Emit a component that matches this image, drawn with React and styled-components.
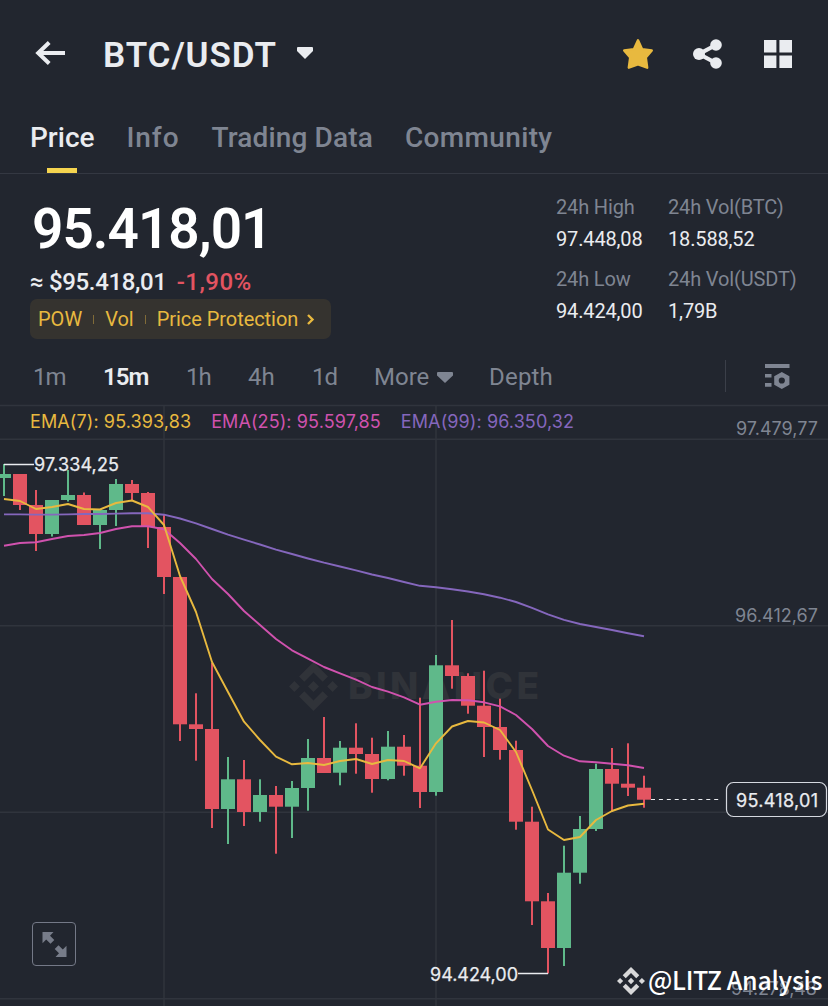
import React from "react";
import styled, { createGlobalStyle } from "styled-components";

const c = {
  bg: "#22262f",
  text: "#eaecf0",
  muted: "#7f8592",
  line: "#30343d",
  gold: "#e8b93f",
  red: "#e35461",
  green: "#5fb98a",
  pink: "#d052ae",
  purple: "#8567bd",
};

const GlobalStyle = createGlobalStyle`
  * { box-sizing: border-box; }
  body { margin: 0; background: ${c.bg}; }
`;

const Screen = styled.main`
  width: 828px;
  height: 1006px;
  overflow: hidden;
  display: flex;
  flex-direction: column;
  background: ${c.bg};
  color: ${c.text};
  font-family: Roboto, "Liberation Sans", sans-serif;
  white-space: nowrap;
`;

const Text = styled.span`
  margin: 0;
  font-size: ${(p) => p.$size}px;
  line-height: ${(p) => p.$line || p.$size}px;
  font-weight: ${(p) => p.$weight || 400};
  letter-spacing: ${(p) => p.$track || 0}px;
  color: ${(p) => p.$color || "inherit"};
`;

const Icon = styled.svg`
  display: block;
  flex: none;
  overflow: visible;
`;

const Header = styled.header`
  height: 108px;
  flex: none;
  display: flex;
  align-items: center;
  padding: 0 36px 0 35px;
`;

const Pair = styled.div`
  display: flex;
  align-items: center;
  gap: 20px;
  margin-left: 37px;
  h1 { padding-top: 2px; }
  svg { margin-bottom: 2px; }
`;

const BackIcon = styled(Icon)`
  margin-bottom: 2px;
`;

const Actions = styled.div`
  display: flex;
  align-items: center;
  gap: 40px;
  margin-left: auto;
`;

const GridIcon = styled(Icon)`
  margin-left: 2px;
`;

const Tabs = styled.nav`
  height: 66px;
  flex: none;
  display: flex;
  gap: 32px;
  padding-left: 30px;
  border-bottom: 1px solid #343842;
`;

const Tab = styled.div`
  display: flex;
  flex-direction: column;
  align-items: center;
  justify-content: space-between;
  padding-top: 14px;
  color: ${(p) => (p.$active ? c.text : c.muted)};
  &::after {
    content: "";
    width: 30px;
    height: 5px;
    background: ${(p) => (p.$active ? "#f5d44f" : "transparent")};
  }
`;

const Summary = styled.section`
  height: 175px;
  flex: none;
  display: flex;
  justify-content: space-between;
  padding: 0 31px 0 30px;
`;

const PriceBlock = styled.div`
  display: flex;
  flex-direction: column;
  align-items: flex-start;
  padding-top: 27px;
`;

const LastPrice = styled(Text)`
  padding-left: 2px;
`;

const Converted = styled.div`
  display: flex;
  gap: 10px;
  margin-top: 11px;
`;

const Tags = styled.div`
  height: 40px;
  width: 301px;
  margin-top: 3px;
  padding-left: 8px;
  display: flex;
  align-items: center;
  border-radius: 7px;
  background: #35332f;
  color: ${c.gold};
`;

const TagDivider = styled.i`
  width: 1px;
  height: 9px;
  margin: 0 11px;
  background: #806b38;
`;

const TagArrow = styled(Icon)`
  margin-left: 9px;
`;

const Stats = styled.dl`
  width: 241px;
  margin: 0;
  padding-top: 19px;
  display: grid;
  grid-template-columns: 112px 1fr;
  grid-auto-rows: 72px;
`;

const StatCell = styled.div`
  display: flex;
  flex-direction: column;
  gap: 4px;
`;

const Periods = styled.nav`
  height: 56px;
  flex: none;
  display: flex;
  align-items: center;
  padding: 0 38px 0 33px;
`;

const PeriodItem = styled.div`
  width: ${(p) => p.$width}px;
  display: flex;
  align-items: center;
  gap: 8px;
  color: ${(p) => (p.$active ? c.text : c.muted)};
`;

const Settings = styled.div`
  height: 32px;
  margin-left: auto;
  margin-bottom: 2px;
  padding-left: 39px;
  display: flex;
  align-items: center;
  border-left: 1px solid #3b3f49;
`;

const ChartArea = styled.section`
  position: relative;
  height: 601px;
  flex: none;
`;

const Legend = styled.div`
  position: absolute;
  top: 7px;
  left: 30px;
  display: flex;
  gap: 20px;
  font-family: Inter, sans-serif;
`;

const ExpandButton = styled.button`
  position: absolute;
  left: 32px;
  top: 517px;
  width: 44px;
  height: 44px;
  padding: 0;
  display: grid;
  place-items: center;
  border: 1.5px solid #747987;
  border-radius: 4px;
  background: transparent;
`;

const Signature = styled.div`
  position: absolute;
  left: 617px;
  top: 558px;
  display: flex;
  align-items: center;
  gap: 3px;
  color: #fff;
  font-family: "Noto Sans CJK SC", "Noto Sans", sans-serif;
  span { margin-top: -3px; }
`;

// [direction, high, open/close top, open/close bottom, low]
const candles = [
  ["g", 464, 474, 478, 496], ["r", 474, 474, 505, 510],
  ["r", 490, 505, 534, 551], ["g", 500, 500, 534, 536.5],
  ["g", 470, 495, 500, 501.5], ["r", 492.5, 495, 525, 525],
  ["g", 510, 510, 525, 549], ["g", 479, 484, 510, 526],
  ["r", 480, 484, 493, 500.5], ["r", 492, 493, 527, 548],
  ["r", 515, 527, 577, 594], ["r", 577, 577, 724.3, 741],
  ["r", 693.3, 724.3, 729, 760.7], ["r", 663, 729, 809, 828],
  ["g", 757, 779.3, 809, 844], ["r", 760, 779.3, 812, 826],
  ["g", 779.3, 795, 812, 821.7], ["r", 786, 795, 806.7, 853.7],
  ["g", 781, 788, 806.7, 838], ["g", 739, 758, 788, 810.7],
  ["r", 717, 758, 773, 773], ["g", 741, 747.7, 772.7, 785.3],
  ["r", 723.3, 747.7, 754, 773.7], ["r", 737.7, 754, 779, 792.7],
  ["g", 731, 746.7, 779, 780.3], ["r", 735, 746.7, 765.7, 775.7],
  ["r", 697.7, 765.7, 792, 808], ["g", 655, 665.3, 792, 795.7],
  ["r", 620, 665.3, 676, 688.7], ["r", 673.3, 676, 705.7, 713.7],
  ["r", 670.7, 705.7, 727, 757], ["r", 698.7, 727, 750, 759.7],
  ["r", 740.7, 750, 821.7, 829.7], ["r", 806.7, 821.7, 901.3, 925],
  ["r", 893, 901.3, 948, 973.5], ["g", 845.7, 872.7, 948, 966],
  ["g", 816, 829, 872.7, 883.7], ["g", 763.7, 769, 829, 831],
  ["r", 748, 769, 783.7, 812], ["r", 743.3, 783.7, 787.7, 796],
  ["r", 775.7, 787.7, 799.7, 807.7],
];

const ema7 = [499, 501, 509, 507, 504, 509, 509.5, 503, 500.5, 507, 525, 576, 612, 662, 692, 721.7, 740, 756.7, 764.3, 763, 765, 761, 759, 764, 760, 761, 768.3, 743.3, 726.5, 721, 722.5, 730, 752, 790, 829.5, 840, 837, 820, 811, 805.5, 803.7];
const ema25 = [545.7, 543, 542.2, 539, 536, 535, 533, 529, 526.3, 526.3, 529.3, 543, 559, 579, 594, 611, 625, 639, 650.3, 658.7, 667, 673.3, 679.7, 687, 691.7, 697.3, 704.7, 701.7, 700, 700.3, 702.3, 706.3, 715, 729, 746, 755.7, 761.3, 762.3, 763.7, 765.3, 768];
const ema99 = [514.4, 514.4, 514.6, 514.6, 514.4, 514, 514, 513.6, 513.2, 513.2, 514.7, 518.5, 523.3, 529, 534.7, 539.7, 544.5, 549.6, 554, 558.5, 562.7, 566.5, 570.3, 574.5, 578, 582, 585.8, 587.3, 589.3, 591.5, 594.2, 597.7, 602, 607.8, 614.3, 619.8, 624, 627, 630, 633.3, 636.3];

const toPath = (values) => values.map((y, i) => `${i ? "L" : "M"}${4 + i * 16} ${y}`).join(" ");

function Diamond({ color, ...box }) {
  return (
    <Icon viewBox="0 0 48 48" fill={color} {...box}>
      <path d="M24 0 38.2 14.2 33 19.4 24 10.4 15 19.4 9.8 14.2Z" />
      <path d="M24 48 38.2 33.8 33 28.6 24 37.6 15 28.6 9.8 33.8Z" />
      <path d="M24 18.6 29.4 24 24 29.4 18.6 24ZM5.3 18.7 10.6 24 5.3 29.3 0 24ZM42.7 18.7 48 24 42.7 29.3 37.4 24Z" />
    </Icon>
  );
}

function Chart() {
  const label = { fontFamily: "Inter, sans-serif", fontSize: 18, lengthAdjust: "spacingAndGlyphs" };
  return (
    <Icon width="828" height="601" viewBox="0 405 828 601">
      <g stroke={c.line} strokeWidth="1.5">
        <path d="M0 405.5H828M0 439.2H828M0 625.7H828M0 812.3H828M0 998.8H828M164 406V1006M436 406V1006" />
      </g>
      <Diamond color="#303339" x="289" y="662" width="49" height="49" />
      <text x="348" y="699" fill="#303339" fontFamily="Inter, sans-serif" fontSize="37" fontWeight="800" textLength="191">BINANCE</text>
      {candles.map(([dir, high, top, bottom, low], i) => {
        const x = 4 + i * 16;
        const color = dir === "g" ? c.green : c.red;
        return (
          <g key={x} fill={color}>
            <rect x={x - 1} y={high} width="2" height={low - high} />
            <rect x={x - 7} y={top} width="14" height={bottom - top} />
          </g>
        );
      })}
      <g fill="none" strokeWidth="1.9" strokeLinejoin="round">
        <path d={toPath(ema99)} stroke={c.purple} />
        <path d={toPath(ema25)} stroke={c.pink} />
        <path d={toPath(ema7)} stroke={c.gold} />
      </g>
      <path d="M4 464.5H34M518 973.5H548" stroke={c.text} strokeWidth="1.4" />
      <path d="M651 799.5H720" stroke={c.text} strokeWidth="1.2" strokeDasharray="4 3.9" />
      <g fill={c.muted} {...label}>
        <text x="736" y="435" textLength="82">97.479,77</text>
        <text x="735" y="622" textLength="83">96.412,67</text>
        <text x="731" y="995" textLength="86">94.278,48</text>
      </g>
      <rect x="726.5" y="782.5" width="100" height="34" rx="7" fill={c.bg} stroke="#d5d8df" strokeWidth="1.2" />
      <g fill={c.text} stroke={c.text} strokeWidth=".25" {...label}>
        <text x="34" y="471" textLength="85">97.334,25</text>
        <text x="430" y="981" textLength="88">94.424,00</text>
        <text x="736" y="807" textLength="82">95.418,01</text>
      </g>
    </Icon>
  );
}

const tabs = [["Price", 0], ["Info", 0.9], ["Trading Data", 0.15], ["Community", 0.35]];
const stats = [["24h High", "97.448,08"], ["24h Vol(BTC)", "18.588,52"], ["24h Low", "94.424,00"], ["24h Vol(USDT)", "1,79B"]];
const periods = [["1m", 70, -1], ["15m", 83, -1], ["1h", 62, -1], ["4h", 64, 0], ["1d", 62, -1], ["More", 115, 0], ["Depth", 66, 0.2]];
const averages = [["EMA(7): 95.393,83", c.gold], ["EMA(25): 95.597,85", c.pink], ["EMA(99): 96.350,32", c.purple]];

export default function App() {
  return (
    <Screen>
      <GlobalStyle />
      <Header>
        <BackIcon width="31" height="24" viewBox="0 0 31 24" fill="none" stroke={c.text} strokeWidth="4">
          <path d="M3 12H30M14.2 1.5 3.2 12 14.2 22.5" />
        </BackIcon>
        <Pair>
          <Text as="h1" $size={35} $weight={600} $track={0.9}>BTC/USDT</Text>
          <Icon width="16" height="12" viewBox="0 0 16 12" fill={c.text}>
            <path d="M1 0H15Q16 0 16 1V4L8 12 0 4V1Q0 0 1 0Z" />
          </Icon>
        </Pair>
        <Actions>
          <Icon width="30" height="30" viewBox="0 0 30 30" fill={c.gold} stroke={c.gold} strokeWidth="2.4" strokeLinejoin="round">
            <path d="M15 1.3 19 10.1 28.8 11.4 22.8 18.5 24.2 28.7 15 25.3 5.8 28.7 7.2 18.5 1.2 11.4 11 10.1Z" />
          </Icon>
          <Icon width="29" height="30" viewBox="0 0 29 30" fill={c.text}>
            <path d="M23 6 6 15 23 24" fill="none" stroke={c.text} strokeWidth="4.2" />
            <circle cx="23" cy="6" r="5.8" />
            <circle cx="6" cy="15" r="6" />
            <circle cx="23" cy="24" r="5.8" />
          </Icon>
          <GridIcon width="28" height="28" viewBox="0 0 28 28" fill={c.text}>
            <path d="M0 0H12.4V12.4H0ZM15.4 0H28V12.4H15.4ZM0 15.4H12.4V28H0ZM15.4 15.4H28V28H15.4Z" />
          </GridIcon>
        </Actions>
      </Header>
      <Tabs>
        {tabs.map(([name, track], i) => (
          <Tab key={name} $active={i === 0}>
            <Text $size={28} $line={32} $weight={500} $track={track}>{name}</Text>
          </Tab>
        ))}
      </Tabs>
      <Summary>
        <PriceBlock>
          <LastPrice $size={55} $line={56} $weight={600} $track={-1} $color="#fff">95.418,01</LastPrice>
          <Converted>
            <Text $size={24} $line={28} $weight={500} $track={-0.35}>≈ $95.418,01</Text>
            <Text $size={24} $line={28} $weight={500} $track={0.5} $color={c.red}>-1,90%</Text>
          </Converted>
          <Tags>
            <Text $size={20}>POW</Text>
            <TagDivider />
            <Text $size={20}>Vol</Text>
            <TagDivider />
            <Text $size={20} $track={-0.05}>Price Protection</Text>
            <TagArrow width="7" height="11" viewBox="0 0 7 11" fill="none" stroke={c.gold} strokeWidth="2.4">
              <path d="M1 1 5.5 5.5 1 10" />
            </TagArrow>
          </Tags>
        </PriceBlock>
        <Stats>
          {stats.map(([name, value]) => (
            <StatCell key={name}>
              <Text as="dt" $size={20} $line={28} $track={-0.15} $color={c.muted}>{name}</Text>
              <Text as="dd" $size={20} $line={28} $track={-0.15}>{value}</Text>
            </StatCell>
          ))}
        </Stats>
      </Summary>
      <Periods>
        {periods.map(([name, width, track]) => (
          <PeriodItem key={name} $width={width} $active={name === "15m"}>
            <Text $size={24} $line={28} $track={track} $weight={name === "15m" ? 600 : 400}>{name}</Text>
            {name === "More" && (
              <Icon width="16" height="11" viewBox="0 0 16 11" fill={c.muted}>
                <path d="M1 0H15Q16 0 16 1V3.5L8 11 0 3.5V1Q0 0 1 0Z" />
              </Icon>
            )}
          </PeriodItem>
        ))}
        <Settings>
          <Icon width="25" height="25" viewBox="0 0 25 25" fill={c.muted}>
            <path d="M0 0H24.5V4H0ZM0 10H6.5V13.5H0ZM0 19H6.5V22.7H0Z" />
            <path fillRule="evenodd" d="M16.8 8 24.4 12.2V20.8L16.8 25 9.2 20.8V12.2ZM16.8 13.4A3.1 3.1 0 1 0 16.8 19.6 3.1 3.1 0 1 0 16.8 13.4Z" />
          </Icon>
        </Settings>
      </Periods>
      <ChartArea>
        <Chart />
        <Legend>
          {averages.map(([name, color]) => (
            <Text key={name} $size={18} $line={20} $track={0.1} $color={color}>{name}</Text>
          ))}
        </Legend>
        <ExpandButton aria-label="Expand chart">
          <Icon width="25" height="25" viewBox="0 0 25 25" fill="#777c89">
            <path d="M.5 0H11.5L8 3.7 12.3 8 8.5 11.8 4.2 7.5.5 11.2ZM24.5 25H13.5L17 21.3 12.7 17 16.5 13.2 20.8 17.5 24.5 13.8Z" />
          </Icon>
        </ExpandButton>
        <Signature>
          <Diamond color="#d8d8d9" width="28" height="28" />
          <Text $size={25} $line={38} $weight={500} $track={-0.3}>@LITZ Analysis</Text>
        </Signature>
      </ChartArea>
    </Screen>
  );
}
